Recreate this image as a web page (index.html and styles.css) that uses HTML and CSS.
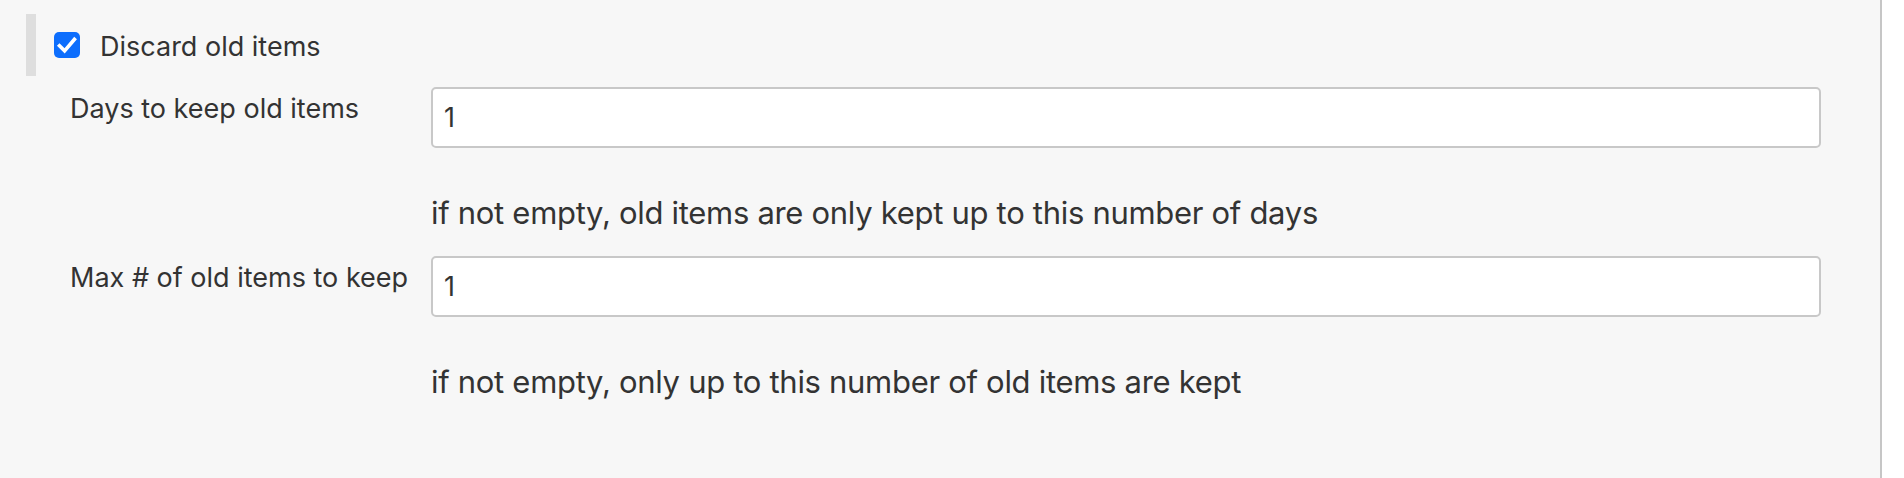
FILE: index.html
```html
<!DOCTYPE html>
<html lang="en">
<head>
    <meta charset="UTF-8">
    <meta name="viewport" content="width=device-width, initial-scale=1.0">
    <title>Feed settings</title>
    <link rel="stylesheet" href="styles.css">
</head>
<body>
    <div class="panel">
        <div class="toggle">
            <label class="check">
                <input type="checkbox" id="discard" checked>
                <span class="box">
                    <svg viewBox="0 0 26 26" width="26" height="26">
                        <path d="M5.5 13.8 L10.6 18.8 L20.4 7.4" fill="none" stroke="#fff" stroke-width="3.6" stroke-linecap="square" stroke-linejoin="miter"/>
                    </svg>
                </span>
                <span class="check-text">Discard old items</span>
            </label>
        </div>

        <div class="field">
            <label class="field-label" for="days">Days to keep old items</label>
            <div class="field-body">
                <input type="text" id="days" value="1">
                <p class="help">if not empty, old items are only kept up to this number of days</p>
            </div>
        </div>

        <div class="field">
            <label class="field-label" for="maxItems">Max # of old items to keep</label>
            <div class="field-body">
                <input type="text" id="maxItems" value="1">
                <p class="help">if not empty, only up to this number of old items are kept</p>
            </div>
        </div>
    </div>
</body>
</html>
```

FILE: styles.css
```css
html, body {
    height: 100%;
}
body {
    margin: 0;
    background: #fff;
    font-family: 'Inter', 'Noto Sans', sans-serif;
    color: #333;
    display: flex;
}
.panel {
    flex: none;
    width: 1882px;
    box-sizing: border-box;
    background: #f7f7f7;
    border-right: 2px solid #c6c6c6;
    padding: 14px 0 0 26px;
}
.toggle {
    height: 62px;
    border-left: 10px solid #dedede;
    padding-left: 18px;
    display: flex;
    align-items: center;
}
.check {
    display: flex;
    align-items: center;
    gap: 20px;
    font-size: 27px;
    line-height: 32px;
    cursor: pointer;
}
.check input {
    position: absolute;
    opacity: 0;
    width: 0;
    height: 0;
    margin: 0;
}
.check-text {
    padding-top: 4px;
}
.box {
    width: 26px;
    height: 26px;
    border-radius: 5px;
    background: #0d6efd; /* azul do checkbox */
    display: block;
}
.box svg {
    display: block;
}
.field {
    display: grid;
    grid-template-columns: 361px 1390px;
    margin: 11px 0 23px 44px;
}
.field + .field {
    margin-top: 0;
}
.field-label {
    font-size: 27px;
    line-height: 32px;
    padding-top: 6px;
}
.field-body input {
    display: block;
    width: 100%;
    height: 61px;
    box-sizing: border-box;
    border: 2px solid #c8c8c8;
    border-radius: 5px;
    background: #fff;
    padding: 0 11px;
    font-family: inherit;
    font-size: 27px;
    color: #333;
    outline: none;
}
.help {
    margin: 45px 0 0;
    font-size: 31px;
    letter-spacing: -0.3px;
    line-height: 40px;
}
```
